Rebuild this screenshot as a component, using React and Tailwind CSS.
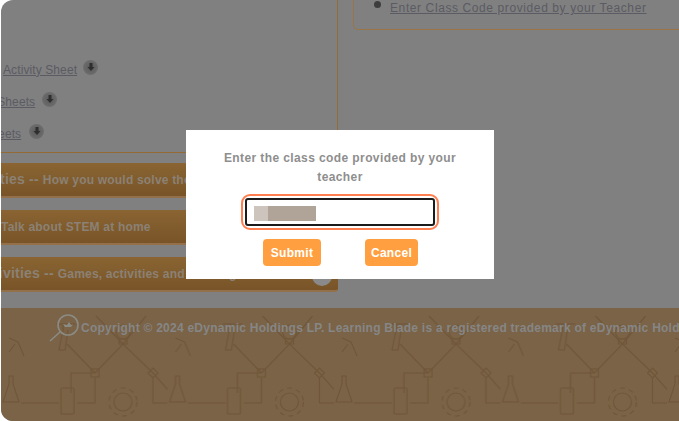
import React from 'react';

const font = { fontFamily: '"Liberation Sans", Arial, sans-serif' };

const DownloadBadge = () => (
  <span className="flex h-[15px] w-[15px] shrink-0 items-center justify-center rounded-full bg-[radial-gradient(circle,#5a5a5a_0%,#6a6a6a_60%,#767676_100%)]">
    <svg viewBox="0 0 10 10" className="h-[10px] w-[10px]">
      <path d="M3.5 1h3v4h2L5 9 1.500 5h2z" fill="#2e2e2e" />
    </svg>
  </span>
);

const SheetLink = ({ label, offset, gap }) => (
  <div className={`flex h-[32px] items-center whitespace-nowrap ${offset} ${gap}`}>
    <a className="text-[12px] leading-none tracking-[0.1px] text-[#5b5b63] underline pt-[5px]">{label}</a>
    <DownloadBadge />
  </div>
);

const ActivityBar = ({ children, className }) => (
  <div className={`flex h-[35px] w-full items-center overflow-hidden whitespace-nowrap rounded-r-[3px] border-b-2 border-[#94704a] bg-[linear-gradient(#8a6432,#785428)] font-bold text-[#8b8175] ${className}`}>
    {children}
  </div>
);

const FooterPattern = () => (
  <svg className="absolute inset-0 h-full w-full" aria-hidden="true">
    <defs>
      <pattern id="tile" width="166.500" height="113" patternUnits="userSpaceOnUse">
        <g fill="none" stroke="#705639" strokeWidth="1.200">
          <path d="M94 65 122 36 152 65 176 92M94 65 66 36M122 36 95 8M122 36 145 8M94 65H70V85M94 70V95H76M152 70V95H184" />
          <rect x="90" y="61" width="8" height="8" />
          <path d="m152 60 5 5-5 5-5-5z" />
          <circle cx="122" cy="24" r="7" />
          <path d="M118 31h8v5h-8z" />
          <path d="M8 30l9 4 6 14M14 36l-6 8" />
          <path d="M55 16h20M62 16v6l-4 20h6l3-20" />
          <rect x="60" y="80" width="13" height="26" rx="1" />
          <circle cx="122" cy="94" r="9" />
          <circle cx="122" cy="94" r="14" strokeDasharray="5 4" />
          <path d="M8 68v8l-6 18h16l-6-18v-8zM20 95h38" />
        </g>
      </pattern>
    </defs>
    <rect width="100%" height="100%" fill="url(#tile)" />
  </svg>
);

const Modal = () => (
  <div className="absolute left-[186px] top-[130px] flex h-[149px] w-[308px] flex-col items-center bg-white pt-[19px]">
    <p className="w-[260px] text-center text-[12px] font-bold leading-[19px] tracking-[0.4px] text-[#8e8e8e]">
      Enter the class code provided by your teacher
    </p>
    <div className="mt-[7px] rounded-[9px] border-[2px] border-[#ff7f50] p-[2px]">
      <div className="flex h-[28px] w-[190px] rounded-[3px] border-2 border-[#1b1b1b] bg-white pl-[7px] pt-[6px]">
        <div className="flex h-[15px] items-start">
          <span className="h-[15px] w-[14px] bg-[#ccc4bd]" />
          <span className="h-[15px] w-[48px] bg-[#b0a498]" />
        </div>
      </div>
    </div>
    <div className="mt-[9px] flex gap-[44px] pl-[1px]">
      <button className="h-[27px] w-[58px] rounded-[4px] bg-[#ff9f40] text-[12px] font-bold tracking-[0.3px] text-white">Submit</button>
      <button className="h-[27px] w-[53px] rounded-[4px] bg-[#ff9f40] text-[12px] font-bold tracking-[0.3px] text-white">Cancel</button>
    </div>
  </div>
);

export default function App() {
  return (
    <div style={font} className="relative h-[421px] w-[679px] overflow-hidden bg-white pl-px">
      <div className="flex h-full flex-col overflow-hidden rounded-l-[12px] bg-[#808080]">
        <main className="flex h-[308px] shrink-0">
          <section className="w-[337px] shrink-0 overflow-hidden">
            <div className="h-[153px] overflow-hidden border-b border-r border-[#946a35] pt-[51px]">
              <SheetLink label="Activity Sheet" offset="ml-[2px]" gap="gap-[6px]" />
              <SheetLink label="Activity Sheets" offset="-ml-[46px]" gap="gap-[7px]" />
              <SheetLink label="Activity Sheets" offset="-ml-[60px]" gap="gap-[8px]" />
            </div>
            <div className="mt-[10px] flex flex-col gap-[12px]">
              <ActivityBar>
                <span className="-ml-[13px] text-[14px] tracking-[0.2px]">vities --</span>
                <span className="ml-[4px] text-[12px] tracking-[0.2px]">How you would solve the</span>
              </ActivityBar>
              <ActivityBar>
                <span className="text-[12px] tracking-[0.2px]">Talk about STEM at home</span>
              </ActivityBar>
              <ActivityBar className="relative">
                <span className="-ml-[7px] text-[14px] tracking-[0.2px]">tivities --</span>
                <span className="ml-[4px] text-[12px] tracking-[0.2px]">Games, activities and learning exercises</span>
                <span className="absolute right-[6px] top-[9px] h-[20px] w-[20px] rounded-full bg-[#8a8a8a]" />
              </ActivityBar>
            </div>
          </section>
          <section className="ml-[15px] flex-1">
            <div className="flex h-[30px] items-start rounded-bl-[5px] border-b border-l border-[#9a7444] pl-[20px]">
              <span className="mt-[1px] h-[7px] w-[7px] rounded-full bg-[#3d3d3d]" />
              <a className="-mt-px ml-[9px] whitespace-nowrap text-[12px] leading-[18px] tracking-[0.6px] text-[#5b5b63] underline">
                Enter Class Code provided by your Teacher
              </a>
            </div>
          </section>
        </main>
        <footer className="relative flex-1 overflow-hidden bg-[#7a6347]">
          <FooterPattern />
          <div className="relative flex h-[38px] items-center whitespace-nowrap pl-[48px] pt-[1px]">
            <svg viewBox="0 0 32 30" className="h-[30px] w-[32px] shrink-0">
              <circle cx="19" cy="12" r="10" fill="none" stroke="#8b8b84" strokeWidth="1.600" />
              <path d="M11 19 1 28" stroke="#8b8b84" strokeWidth="1.600" />
              <path d="M14 11l2 3h6l2-3-2 1-2-3-2 3z" fill="#8b8b84" />
            </svg>
            <span className="text-[12px] font-bold tracking-[0.25px] text-[#868686]">
              Copyright © 2024 eDynamic Holdings LP. Learning Blade is a registered trademark of eDynamic Holdings LP.
            </span>
          </div>
        </footer>
      </div>
      <Modal />
    </div>
  );
}
